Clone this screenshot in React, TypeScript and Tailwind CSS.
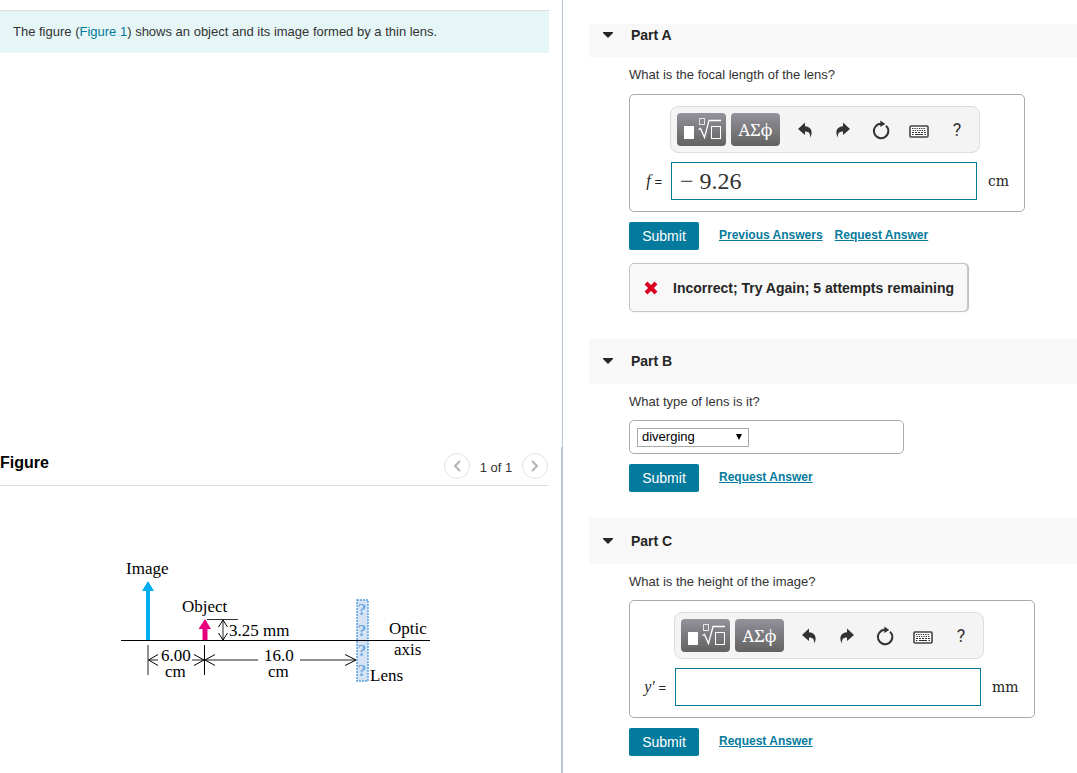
import { useState } from 'react';
import type { ReactNode } from 'react';

function CaretIcon() {
  return (
    <svg width="10" height="6" viewBox="0 0 10 6" aria-hidden="true">
      <path d="M0 0h10v1L5 6 0 1z" fill="#252525" />
    </svg>
  );
}

function UndoIcon({ flip = false }: { flip?: boolean }) {
  return (
    <svg width="16" height="16" viewBox="0 0 16 16" className={flip ? '-scale-x-100' : ''} aria-hidden="true">
      <path d="M1 7L8 .5v3.700c4 .3 6.600 2.600 6.600 6.300 0 2-.6 3.600-1.600 5 .6-3.900-1-6-5-6v3.500z" fill="#333333" />
    </svg>
  );
}

function ResetIcon() {
  return (
    <svg width="18" height="20" viewBox="0 0 18 20" aria-hidden="true">
      <path d="M14 5.700A7.200 7.200 0 1 1 9 3.800" fill="none" stroke="#333333" strokeWidth="2" />
      <path d="M8.300 .5l5 3.600-5 3z" fill="#333333" />
    </svg>
  );
}

function KeyboardIcon() {
  return (
    <svg width="20" height="13" viewBox="0 0 20 13" aria-hidden="true">
      <rect x="1" y="1" width="18" height="11" rx="1" fill="#ffffff" stroke="#444444" strokeWidth="1.600" />
      <path d="M3 3.500h14M3.500 5.500h13" stroke="#333333" strokeWidth="1.200" strokeDasharray="1.300 1" />
      <path d="M3 7.500h14" stroke="#333333" strokeWidth="1.200" strokeDasharray="2 1" />
      <path d="M3 9.500h1.500M6 9.500h8M15.500 9.500H17" stroke="#333333" strokeWidth="1.200" />
    </svg>
  );
}

function TemplateIcon() {
  return (
    <svg width="40" height="25" viewBox="0 0 40 25" aria-hidden="true">
      <rect x="2" y="9" width="10" height="13" fill="#ffffff" />
      <rect x="17.500" y="1.500" width="5" height="6" fill="none" stroke="#e4e4e4" />
      <path d="M16.500 12.500l2-1 4 9L27 3.500h12" fill="none" stroke="#ffffff" strokeWidth="1.300" />
      <rect x="29.500" y="9.500" width="9" height="12" fill="none" stroke="#ffffff" />
    </svg>
  );
}

function MathToolbar() {
  const dark =
    'flex h-[33px] w-[49px] items-center justify-center rounded bg-linear-to-b from-[#94929b] to-[#626262] text-white';
  const plain = 'flex h-[33px] w-[38px] items-center justify-center text-[#333333]';

  return (
    <div className="flex h-[47px] w-[310px] items-center rounded-lg border border-[#dddddd] bg-[#f4f4f4] pl-[6px]">
      <button type="button" aria-label="Templates" className={dark}>
        <TemplateIcon />
      </button>
      <button type="button" aria-label="Symbols" className={`${dark} ml-[5px] font-['Noto_Serif','Liberation_Serif',serif] text-[17px]`}>
        ΑΣϕ
      </button>
      <div className="ml-[6px] flex">
        <button type="button" aria-label="Undo" className={plain}>
          <UndoIcon />
        </button>
        <button type="button" aria-label="Redo" className={plain}>
          <UndoIcon flip />
        </button>
        <button type="button" aria-label="Reset" className={plain}>
          <ResetIcon />
        </button>
        <button type="button" aria-label="Keyboard shortcuts" className={`${plain} pt-[3px]`}>
          <KeyboardIcon />
        </button>
        <button type="button" aria-label="Help" className={`${plain} font-['Roboto',sans-serif] text-[18px]`}>
          ?
        </button>
      </div>
    </div>
  );
}

interface MathAnswerProps {
  id: string;
  label: ReactNode;
  unit: string;
  initial: string;
  wide?: boolean;
}

function MathAnswer({ id, label, unit, initial, wide = false }: MathAnswerProps) {
  const [value, setValue] = useState(initial);

  return (
    <div className="w-fit rounded-[5px] border border-[#a9a9a9] py-[11px] pr-[15px]">
      <div className={wide ? 'pl-11' : 'pl-10'}>
        <MathToolbar />
      </div>
      <div className="mt-[9px] flex items-center">
        <label htmlFor={id} className={`${wide ? 'w-9' : 'w-8'} text-right text-[13px] whitespace-nowrap text-[#252525]`}>
          {label}
        </label>
        <input
          id={id}
          value={value}
          onChange={(e) => setValue(e.target.value)}
          className="ml-[9px] h-[38px] w-[306px] border border-[#047a9c] px-2 font-['Liberation_Serif',serif] text-[24px] text-[#333333] outline-none"
        />
        <span className="ml-[11px] font-['DejaVu_Serif',serif] text-sm text-[#252525]">{unit}</span>
      </div>
    </div>
  );
}

function Actions({ links }: { links: string[] }) {
  return (
    <div className="mt-[10px] flex h-7 items-center">
      <button type="button" className="h-7 w-[70px] rounded-xs bg-[#047a9c] text-sm text-white">
        Submit
      </button>
      <div className="ml-5 flex gap-3 pb-[2px]">
        {links.map((link) => (
          <a key={link} href="#" className="text-xs font-bold text-[#047a9c] underline">
            {link}
          </a>
        ))}
      </div>
    </div>
  );
}

interface PartProps {
  title: string;
  question: string;
  questionFor: string;
  first?: boolean;
  children: ReactNode;
}

function Part({ title, question, questionFor, first = false, children }: PartProps) {
  return (
    <section className="mb-[26px] last:mb-0">
      <h2
        className={`${first ? 'h-[33px] pb-[11px]' : 'h-[46px]'} flex items-center bg-[#f8f8f8] pl-[14px] text-sm font-bold text-[#252525]`}
      >
        <button type="button" className="flex items-center gap-[18px]">
          <CaretIcon />
          {title}
        </button>
      </h2>
      <div className="pl-10">
        <label
          htmlFor={questionFor}
          className={`${first ? 'h-[37px]' : 'h-9'} block pt-2 text-[13px] leading-5 text-[#333333]`}
        >
          {question}
        </label>
        {children}
      </div>
    </section>
  );
}

function LensDiagram() {
  return (
    <svg width="312" height="130" viewBox="120 558 312 130" role="img" aria-label="Object and image on the optic axis of a lens">
      {/* lens */}
      <rect x="357" y="600" width="11" height="81" fill="#d6e3f5" stroke="#5ba0e0" strokeWidth="1.500" strokeDasharray="2 1" />
      <g fontFamily="Liberation Serif, serif" fontSize="17" fontWeight="bold" fill="#6ba8e0" textAnchor="middle">
        <text x="362" y="615">?</text>
        <text x="362" y="636">?</text>
        <text x="362" y="656">?</text>
        <text x="362" y="676">?</text>
      </g>

      {/* optic axis */}
      <path d="M121 640.500h309" stroke="#000000" />

      {/* image and object arrows */}
      <path d="M146 640v-49h-4l6-10 6 10h-4v49z" fill="#00aeef" />
      <path d="M202.500 640v-11h-4l6.500-10 6 10h-3.500v11z" fill="#e6007e" />

      {/* dimension lines */}
      <g fill="none" stroke="#6d6d6d">
        <path d="M207 619.500h31" stroke="#333333" />
        <path d="M223 620v20M148 645v30M149 660h9M192 660h12M206 660h52M300 660h56" strokeWidth="1.500" />
      </g>
      <g fill="none" stroke="#000000">
        <path d="M204.500 645v30" />
        <path d="M218.500 627l4.500-7 4.500 7M218.500 633l4.500 7 4.500-7" />
        <path d="M158 654.500l-9.500 5.500 9.500 5.500M194 654.500l10 5.500-10 5.500M215 654.500l-10 5.500 10 5.500M345 654.500l11 5.500-11 5.500" />
      </g>

      <g fontFamily="Liberation Serif, serif" fontSize="17" fill="#000000">
        <text x="126" y="574">Image</text>
        <text x="182" y="612">Object</text>
        <text x="229" y="636">3.25 mm</text>
        <text x="161" y="661">6.00</text>
        <text x="165" y="677">cm</text>
        <text x="264" y="661">16.0</text>
        <text x="268" y="677">cm</text>
        <text x="389" y="634">Optic</text>
        <text x="394" y="655">axis</text>
        <text x="370" y="681">Lens</text>
      </g>
    </svg>
  );
}

function Chevron({ d }: { d: string }) {
  return (
    <svg width="8" height="12" viewBox="0 0 8 12" aria-hidden="true">
      <path d={d} fill="none" stroke="#b3b3b3" strokeWidth="2" />
    </svg>
  );
}

export default function App() {
  const [lensType, setLensType] = useState('diverging');
  const round = 'flex size-[26px] items-center justify-center rounded-full border border-[#e2e2e2]';

  return (
    <div className="grid min-h-screen grid-cols-[563fr_514fr] bg-white font-['Liberation_Sans',Arial,sans-serif] text-[#333333]">
      <div className="grid grid-rows-[447fr_326fr]">
        <div className="border-r border-[#b5c7d8] pt-[10px] pr-[13px]">
          <p className="border-t border-[#dddddd] bg-[#e6f6f7] px-[13px] py-[11px] text-[13px] leading-5">
            The figure (<a href="#figure" className="text-[#047a9c]">Figure 1</a>) shows an object and its image formed by a thin lens.
          </p>
        </div>

        <div id="figure" className="border-r-2 border-[#b5c7d8] pr-[13px]">
          <div className="flex h-[39px] items-center justify-between border-b border-[#dddddd]">
            <h2 className="pb-[6px] text-base font-bold text-black">Figure</h2>
            <div className="flex items-center">
              <button type="button" aria-label="Previous figure" className={round}>
                <Chevron d="M7 1L2 6l5 5" />
              </button>
              <span className="w-[52px] pt-[3px] text-center text-[13px]">1 of 1</span>
              <button type="button" aria-label="Next figure" className={round}>
                <Chevron d="M1 1l5 5-5 5" />
              </button>
            </div>
          </div>
          <div className="flex justify-center pt-[72px] pl-1">
            <LensDiagram />
          </div>
        </div>
      </div>

      <main className="pt-6 pl-[26px]">
        <Part title="Part A" question="What is the focal length of the lens?" questionFor="focal" first>
          <MathAnswer
            id="focal"
            unit="cm"
            initial="− 9.26"
            label={<><i className="font-['Liberation_Serif',serif] text-base">f</i> =</>}
          />
          <Actions links={['Previous Answers', 'Request Answer']} />
          <div className="mt-[13px] flex h-[49px] w-[339px] items-center rounded-[5px] border border-[#c5c5c5] bg-[#f8f8f8] pl-[14px] text-sm font-bold text-[#252525] shadow-[1px_0_1px_#bbbbbb]">
            <svg width="15" height="14" viewBox="0 0 15 14" className="mr-[14px]" aria-hidden="true">
              <path d="M2 2l10 10M12 2L2 12" stroke="#db0020" strokeWidth="4" />
            </svg>
            Incorrect; Try Again; 5 attempts remaining
          </div>
        </Part>

        <Part title="Part B" question="What type of lens is it?" questionFor="lens-type">
          <div className="flex h-[34px] w-[275px] items-center rounded-[5px] border border-[#a9a9a9] pl-[7px]">
            <div className="relative">
              <select
                id="lens-type"
                value={lensType}
                onChange={(e) => setLensType(e.target.value)}
                className="block h-[19px] w-28 appearance-none border border-[#a9a9a9] bg-white pl-1 text-[13px] leading-4 text-black"
              >
                <option>converging</option>
                <option>diverging</option>
              </select>
              <svg width="6" height="6" viewBox="0 0 6 6" className="pointer-events-none absolute top-[6px] right-[7px]" aria-hidden="true">
                <path d="M0 0h6L3 6z" fill="#000000" />
              </svg>
            </div>
          </div>
          <Actions links={['Request Answer']} />
        </Part>

        <Part title="Part C" question="What is the height of the image?" questionFor="height">
          <MathAnswer
            id="height"
            unit="mm"
            initial=""
            wide
            label={<><i className="font-['Liberation_Serif',serif] text-base">y′</i> =</>}
          />
          <Actions links={['Request Answer']} />
        </Part>
      </main>
    </div>
  );
}
